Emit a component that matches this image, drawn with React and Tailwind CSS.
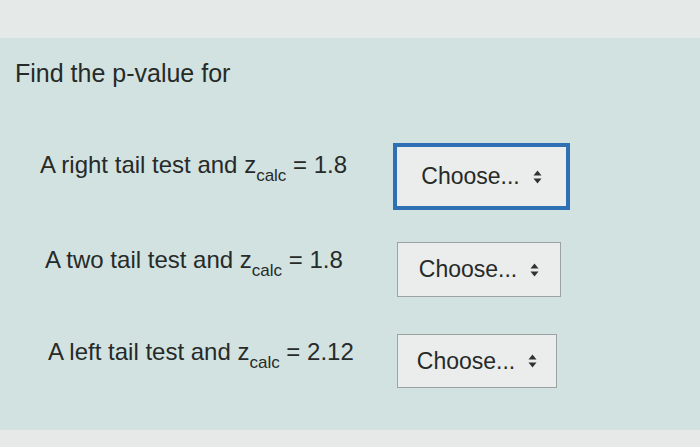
import { useState } from "react";

const rows = [
  { pre: "A right tail test and ", val: "1.8", rowTop: "mt-[55px]", textMl: "ml-[25px]", textW: "w-[353px]", textMt: "mt-[8px]", box: "w-[177px] h-[67px] border-[4px] border-[#2f6fb3]" },
  { pre: "A two tail test and ", val: "1.8", rowTop: "mt-[32px]", textMl: "ml-[30px]", textW: "w-[352px]", textMt: "mt-[4px]", box: "w-[164px] h-[55px] border border-[#9aa3a2]" },
  { pre: "A left tail test and ", val: "2.12", rowTop: "mt-[37px]", textMl: "ml-[33px]", textW: "w-[349px]", textMt: "mt-[4px]", box: "w-[160px] h-[54px] border border-[#9aa3a2]" },
];

function Arrows() {
  return (
    <svg width="9" height="14" viewBox="0 0 9 14" className="ml-[13px]">
      <path d="M4.5 0.5 L8.5 5.5 L0.5 5.5 Z" fill="#2e3432" />
      <path d="M4.5 13.5 L8.5 8.5 L0.5 8.5 Z" fill="#2e3432" />
    </svg>
  );
}

export default function App() {
  const [picked] = useState(null);
  return (
    <div className="w-[700px] h-[447px] flex flex-col overflow-hidden bg-[#e4e8e6] text-[#262a29]" style={{ fontFamily: '"Liberation Sans", Arial, sans-serif' }}>
      <div className="h-[38px] bg-[#e5e9e7]" />
      <div className="flex-1 bg-[#d2e2e0] pl-[15px] pt-[20px]">
        <p className="text-[25px] leading-[30px]">Find the p-value for</p>
        {rows.map((r, i) => (
          <div key={i} className={`flex items-start ${r.rowTop}`}>
            <div className={`${r.textMl} ${r.textW} ${r.textMt} text-[24px] leading-[28px] whitespace-nowrap`}>
              {r.pre}
              <span>z</span>
              <sub className="text-[17px] align-[-4px]">calc</sub> = {r.val}
            </div>
            <div className={`${r.box} bg-[#eaedeb] flex items-center justify-center`}>
              <span className="text-[23px]">{picked || "Choose..."}</span>
              <Arrows />
            </div>
          </div>
        ))}
      </div>
      <div className="h-[17px] bg-[#e6e9e7]" />
    </div>
  );
}
